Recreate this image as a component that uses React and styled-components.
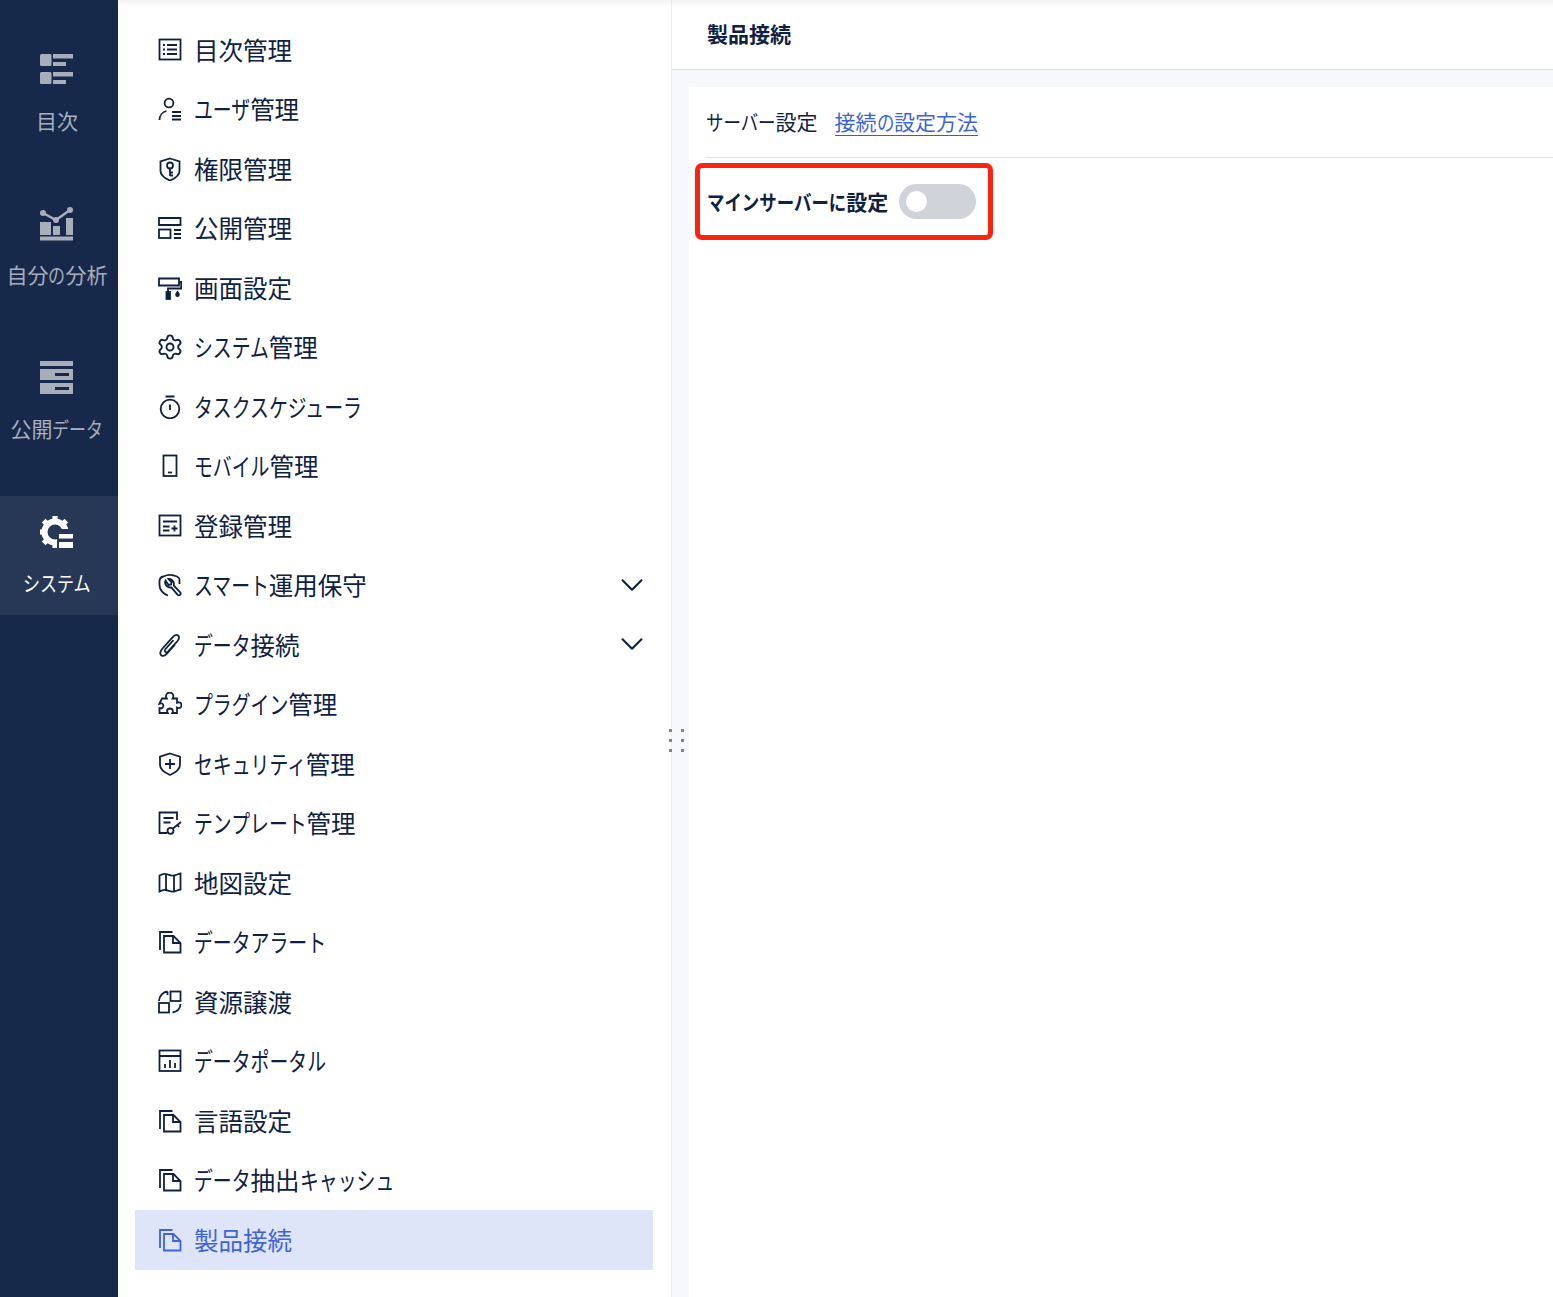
import React from 'react';
import styled, { createGlobalStyle } from 'styled-components';
import { Settings, ChevronDown } from 'lucide-react';

const GlobalStyle = createGlobalStyle`
  html, body {
    margin: 0;
    padding: 0;
    height: 100%;
    overflow: hidden;
    background: #fff;
  }
  body, a, span, div {
    font-family: "Noto Sans CJK JP", "Noto Sans", sans-serif;
  }
`;

const Page = styled.div`
  position: relative;
  display: flex;
  width: 100%;
  height: 100vh;
  color: #0e2144;
  --kana: 0.81;
`;

const TopShade = styled.div`
  position: absolute;
  top: 0;
  left: 118px;
  right: 0;
  height: 7px;
  background: linear-gradient(to bottom, rgba(20, 30, 60, 0.05), rgba(20, 30, 60, 0));
`;

const Rail = styled.nav`
  flex: 0 0 118px;
  display: flex;
  flex-direction: column;
  gap: 35px;
  padding-top: 34px;
  box-sizing: border-box;
  background: #17294b;
`;

const RailItem = styled.div`
  height: 119px;
  display: flex;
  flex-direction: column;
  align-items: center;
  padding: 19px 4px 0 0;
  box-sizing: border-box;
  gap: 18px;
  background: ${(p) => (p.$active ? '#273857' : 'transparent')};
  color: ${(p) => (p.$active ? '#ffffff' : '#a8aebc')};
`;

const RailLabel = styled.span`
  font-size: 21px;
  line-height: 31px;
  white-space: nowrap;
`;

// kana in the reference font is narrower than in Noto, kanji is not
const Kana = styled.span`
  display: inline-block;
  transform: scaleX(var(--kana));
  transform-origin: left center;
  margin-right: calc((var(--kana) - 1) * ${(p) => p.$count} * 1em);
`;

const Tree = styled.aside`
  flex: 0 0 554px;
  box-sizing: border-box;
  padding-top: 20px;
  border-right: 1px solid #eceef3;
  --kana: 0.77;
`;

const Row = styled.div`
  height: 59.5px;
  margin: 0 18px 0 17px;
  padding: 0 12px 0 23px;
  display: flex;
  align-items: center;
  gap: 12px;
  font-size: 24.5px;
  background: ${(p) => (p.$active ? '#dfe5f9' : 'transparent')};
  color: ${(p) => (p.$active ? '#3d63dd' : 'inherit')};
`;

const RowText = styled.span`
  flex: 1;
  white-space: nowrap;
  margin-top: -1.5px;
`;

const Chevron = styled(ChevronDown)`
  width: 38px;
  height: 38px;
  margin: -1px -10px 0 0;
  stroke-width: 1.3;
`;

const IconBox = styled.svg.attrs({
  viewBox: '0 0 24 24',
  fill: 'none',
  stroke: 'currentColor',
  strokeWidth: 1.8,
})`
  flex: 0 0 24px;
  width: 24px;
  height: 24px;
`;

const LucideBox = styled.span`
  flex: 0 0 24px;
  width: 24px;
  height: 24px;
  display: flex;
  align-items: center;
  justify-content: center;
  svg {
    flex: none;
    width: 28px;
    height: 28px;
    stroke-width: 1.6;
  }
`;

const RailSvg = styled.svg.attrs({
  viewBox: '0 0 34 34',
  fill: 'currentColor',
})`
  width: 34px;
  height: 34px;
  flex: none;
`;

const Main = styled.main`
  flex: 1;
  min-width: 0;
  display: flex;
  flex-direction: column;
  background: #f7f8fc;
`;

const Title = styled.header`
  flex: 0 0 70px;
  box-sizing: border-box;
  padding: 0 0 3px 35px;
  display: flex;
  align-items: center;
  background: #fff;
  border-bottom: 1px solid #dcdfe6;
  font-size: 21px;
  font-weight: 700;
`;

const Panel = styled.section`
  flex: 1;
  margin: 17px 0 0 17px;
  background: #fff;
  --kana: 0.83;
`;

const PanelHead = styled.div`
  height: 71px;
  box-sizing: border-box;
  margin-left: 17px;
  padding-bottom: 2px;
  display: flex;
  align-items: center;
  gap: 17px;
  font-size: 21px;
  border-bottom: 1px solid #dfe1e6;
`;

const HelpLink = styled.a`
  color: #3d63dd;
  line-height: 28px;
  border-bottom: 1px solid #2f5fde;
`;

const Marked = styled.div`
  width: fit-content;
  margin: 5px 0 0 6px;
  padding: 15px 12px 16px 7px;
  display: flex;
  align-items: center;
  gap: 11px;
  border: 5px solid #fb2411;
  border-radius: 7px;
  font-size: 21px;
  font-weight: 700;
  box-sizing: border-box;
  height: 77px;
`;

const Toggle = styled.span`
  width: 77px;
  height: 35px;
  padding: 7px;
  box-sizing: border-box;
  border-radius: 18px;
  background: #d0d3da;
  display: flex;
  align-items: center;
`;

const Knob = styled.span`
  width: 21px;
  height: 21px;
  border-radius: 50%;
  background: #fff;
`;

const Grip = styled.div`
  position: absolute;
  left: 669px;
  top: 729px;
  display: grid;
  grid-template-columns: repeat(2, 3px);
  gap: 7px 9px;
  span {
    width: 3px;
    height: 3px;
    background: #7b8595;
  }
`;

const Jp = ({ children }) =>
  children
    .split(/([\u3040-\u30ff]+)/)
    .filter(Boolean)
    .map((part, i) =>
      /[\u3040-\u30ff]/.test(part) ? (
        <Kana key={i} $count={part.length}>{part}</Kana>
      ) : (
        <React.Fragment key={i}>{part}</React.Fragment>
      )
    );

const ListIcon = () => (
  <IconBox>
    <rect x="1.5" y="1.5" width="21" height="20" />
    <path d="M5 7h2M9 7h10M5 11.5h2M9 11.5h10M5 16h2M9 16h10" />
  </IconBox>
);
const UserIcon = () => (
  <IconBox>
    <circle cx="11" cy="6" r="4.4" />
    <path d="M1.5 23c0-4.5 3-8 7-9M14 15h9M14 19h9M14 22.5h9" />
  </IconBox>
);
const KeyShieldIcon = () => (
  <IconBox>
    <path d="M12 1.500l9.500 3v9.500c0 4.500-5.500 7.800-9.500 9.500-4-1.700-9.500-5-9.500-9.500V4.500z" />
    <circle cx="12" cy="8.500" r="3" />
    <path d="M12 11.500V19M12 15.500h3M12 18.500h3" />
  </IconBox>
);
const LayoutIcon = () => (
  <IconBox>
    <path d="M22.500 9V2H1v7z" />
    <rect x="1" y="13.500" width="11.500" height="8.500" />
    <path d="M16 14h7M16 18h7M16 22h7" />
  </IconBox>
);
const RollerIcon = () => (
  <IconBox>
    <path d="M1 2.500h20v7H1z" />
    <path d="M21 6h2.200v6.500H10V16" />
    <rect x="8.500" y="16" width="3.500" height="7" fill="currentColor" />
    <path d="M19.500 14.500c-1.200 1.700-2.300 2.700-2.300 4.200a2.300 2.300 0 0 0 4.600 0c0-1.500-1.100-2.500-2.300-4.200z" fill="currentColor" stroke="none" />
  </IconBox>
);
const TimerIcon = () => (
  <IconBox>
    <circle cx="12" cy="14" r="9.300" />
    <path d="M7.500 1.500h9M12 9.500v5.500" />
  </IconBox>
);
const MobileIcon = () => (
  <IconBox strokeWidth={2}>
    <rect x="5.500" y="1.500" width="13" height="20.500" />
    <path d="M10 18.500h4" />
  </IconBox>
);
const FormIcon = () => (
  <IconBox>
    <rect x="1.500" y="1.500" width="21" height="20" />
    <path d="M5 7.500h14M5 12.500h6.500M5 16.500h6.500M13.500 14.500h6M16.500 11.500v6" />
  </IconBox>
);
const WrenchIcon = () => (
  <IconBox strokeWidth={1.7}>
    <path d="M21.500 11V6.500c0-1.300-.8-2.200-2.500-3-4.500-2-9.500-2-13.500 0C3 3.800 1.500 5.500 1.500 8.500v3.500c0 5 4 9 8.500 10.500" />
    <path d="M7.500 7.500a5 5 0 0 0 5.800 6.800l6.200 7.400c.8.800 1.700.8 2.500.2.800-.7.800-1.700.2-2.500l-6.500-7A5 5 0 0 0 10.500 6l3 3-.5 2.500-2.500.5z" />
  </IconBox>
);
const ClipIcon = () => (
  <IconBox strokeWidth={1.7}>
    <path d="M15.500 7L7.500 16c-1 1.300-.8 2.500 0 3.100.9.600 2 .2 3-.9L19.500 8c2-2.400 2-4.400.6-5.500-1.500-1-3.700-.4-5.400 1.600L4.500 15.500c-2.500 3-2.800 5.500-1.300 6.700 1.500 1.200 3.800.6 5.700-1.500l8-9" />
  </IconBox>
);
const PuzzleIcon = () => (
  <IconBox strokeWidth={1.7}>
    <path d="M4 6.500h4.800C8.200 5.500 8 5 8 4.200a3.700 3.700 0 0 1 7.400 0c0 .8-.2 1.300-.8 2.300h4.400v4.300c1-.5 1.400-.7 2-.5 1.800.2 2.500 1.500 2.500 2.900s-.9 2.800-2.500 2.900c-.6.100-1-.1-2-.6V21h-4.700c.5-1 .7-1.500.6-2.100-.2-1.700-1.500-2.400-2.900-2.400s-2.700.8-2.900 2.400c0 .6.100 1.100.6 2.100H1.500v-5c1.200.4 2 .4 2.700-.1 1-.7 1.200-1.500 1.200-2.300S5 12 4 11.500c-.7-.4-1.500-.3-2.500.1z" />
  </IconBox>
);
const ShieldPlusIcon = () => (
  <IconBox>
    <path d="M12 1.500l10 3.200v8.300c0 4.700-5.500 8-10 10-4.500-2-10-5.300-10-10V4.700z" />
    <path d="M12 7v10M7 12h10" />
  </IconBox>
);
const TemplateIcon = () => (
  <IconBox>
    <path d="M19 9V1.500H1.500V22H9" />
    <path d="M5.500 7h10M5.500 11.500h7" />
    <circle cx="12.500" cy="19.800" r="3" />
    <path d="M15 17.500l8-6.500M19.500 14l1.500 2" />
  </IconBox>
);
const MapIcon = () => (
  <IconBox strokeWidth={2}>
    <path d="M1.500 4.500c2.500-1.500 4.500-2 6.500-1.500 2.500.6 5 2 8 1.500 2.500-.5 4-1.500 6.500-2v16c-2.500.5-4 1.500-6.500 2-3 .5-5.500-.9-8-1.500-2-.5-4 0-6.500 1.500z" />
    <path d="M8 3v16.500M16 4.500V21" />
  </IconBox>
);
const CopyIcon = () => (
  <IconBox strokeWidth={2}>
    <path d="M2 20V2h12.500" />
    <path d="M6 6h9.500l7 7v9.500H6z" />
    <path d="M15 6v7h7.500" />
  </IconBox>
);
const TransferIcon = () => (
  <IconBox>
    <path d="M1 11c0-5 4-9 8.500-9.500M9.500 1.500V5" />
    <rect x="12.500" y="1.500" width="10" height="9.500" />
    <rect x="1" y="13" width="10" height="9.500" />
    <path d="M22.500 14c0 4-3 8-8 8.500" />
  </IconBox>
);
const PortalIcon = () => (
  <IconBox>
    <rect x="1.500" y="1.500" width="21" height="20.500" />
    <path d="M1.500 7h21M7 19v-4M12 19v-8M17 19v-5" />
  </IconBox>
);

const GearIcon = () => (
  <LucideBox>
    <Settings />
  </LucideBox>
);

const rows = [
  ['目次管理', ListIcon],
  ['ユーザ管理', UserIcon],
  ['権限管理', KeyShieldIcon],
  ['公開管理', LayoutIcon],
  ['画面設定', RollerIcon],
  ['システム管理', GearIcon],
  ['タスクスケジューラ', TimerIcon],
  ['モバイル管理', MobileIcon],
  ['登録管理', FormIcon],
  ['スマート運用保守', WrenchIcon, true],
  ['データ接続', ClipIcon, true],
  ['プラグイン管理', PuzzleIcon],
  ['セキュリティ管理', ShieldPlusIcon],
  ['テンプレート管理', TemplateIcon],
  ['地図設定', MapIcon],
  ['データアラート', CopyIcon],
  ['資源譲渡', TransferIcon],
  ['データポータル', PortalIcon],
  ['言語設定', CopyIcon],
  ['データ抽出キャッシュ', CopyIcon],
  ['製品接続', CopyIcon],
];

const CatalogGlyph = () => (
  <RailSvg>
    <rect x="0" y="1" width="11.500" height="12" rx="1.500" />
    <rect x="13" y="1" width="20" height="4.500" />
    <rect x="13" y="9" width="13" height="4" />
    <rect x="0" y="19" width="11.500" height="12" rx="1.500" />
    <rect x="13" y="19" width="20" height="4.500" />
    <rect x="13" y="27" width="13" height="4" />
  </RailSvg>
);

const AnalysisGlyph = () => (
  <RailSvg>
    <circle cx="3" cy="6" r="3" />
    <circle cx="16" cy="13" r="3" />
    <circle cx="30" cy="3" r="3" />
    <path d="M3 6l13 7L30 3" fill="none" stroke="currentColor" strokeWidth="2.500" />
    <rect x="0" y="15" width="11" height="13" />
    <rect x="13" y="19" width="7" height="9" />
    <rect x="26" y="11" width="7" height="17" />
    <rect x="0" y="29.500" width="33" height="4" />
  </RailSvg>
);

const DataGlyph = () => (
  <RailSvg>
    <rect x="0" y="0" width="33" height="5" />
    <path fillRule="evenodd" d="M0 8h33v11H0zM15 12v3h14v-3z" />
    <path fillRule="evenodd" d="M0 22h33v11H0zM15 26v3h14v-3z" />
  </RailSvg>
);

const SystemGlyph = () => (
  <RailSvg>
    <g transform="translate(15 17)">
      {[0, 45, 90, 135, 180, 225, 270, 315].map((a) => (
        <rect key={a} x="-2.600" y="-16" width="5.200" height="6" transform={`rotate(${a})`} />
      ))}
      <circle r="10.500" fill="none" stroke="currentColor" strokeWidth="6" />
    </g>
    <rect x="17" y="14" width="17" height="20" fill="#273857" />
    <rect x="19" y="19" width="14" height="4.500" />
    <rect x="19" y="27" width="14" height="6" />
  </RailSvg>
);

const railItems = [
  ['目次', CatalogGlyph],
  ['自分の分析', AnalysisGlyph],
  ['公開データ', DataGlyph],
  ['システム', SystemGlyph, true],
];

export default function App() {
  return (
    <Page>
      <GlobalStyle />
      <Rail>
        {railItems.map(([label, Glyph, active]) => (
          <RailItem key={label} $active={active}>
            <Glyph />
            <RailLabel><Jp>{label}</Jp></RailLabel>
          </RailItem>
        ))}
      </Rail>
      <Tree>
        {rows.map(([label, Icon, more], i) => (
          <Row key={label} $active={i === rows.length - 1}>
            <Icon />
            <RowText><Jp>{label}</Jp></RowText>
            {more && <Chevron />}
          </Row>
        ))}
      </Tree>
      <Main>
        <Title>製品接続</Title>
        <Panel>
          <PanelHead>
            <span><Jp>サーバー設定</Jp></span>
            <HelpLink><Jp>接続の設定方法</Jp></HelpLink>
          </PanelHead>
          <Marked>
            <span><Jp>マインサーバーに設定</Jp></span>
            <Toggle>
              <Knob />
            </Toggle>
          </Marked>
        </Panel>
      </Main>
      <Grip>
        {Array.from({ length: 6 }, (_, i) => (
          <span key={i} />
        ))}
      </Grip>
      <TopShade />
    </Page>
  );
}
